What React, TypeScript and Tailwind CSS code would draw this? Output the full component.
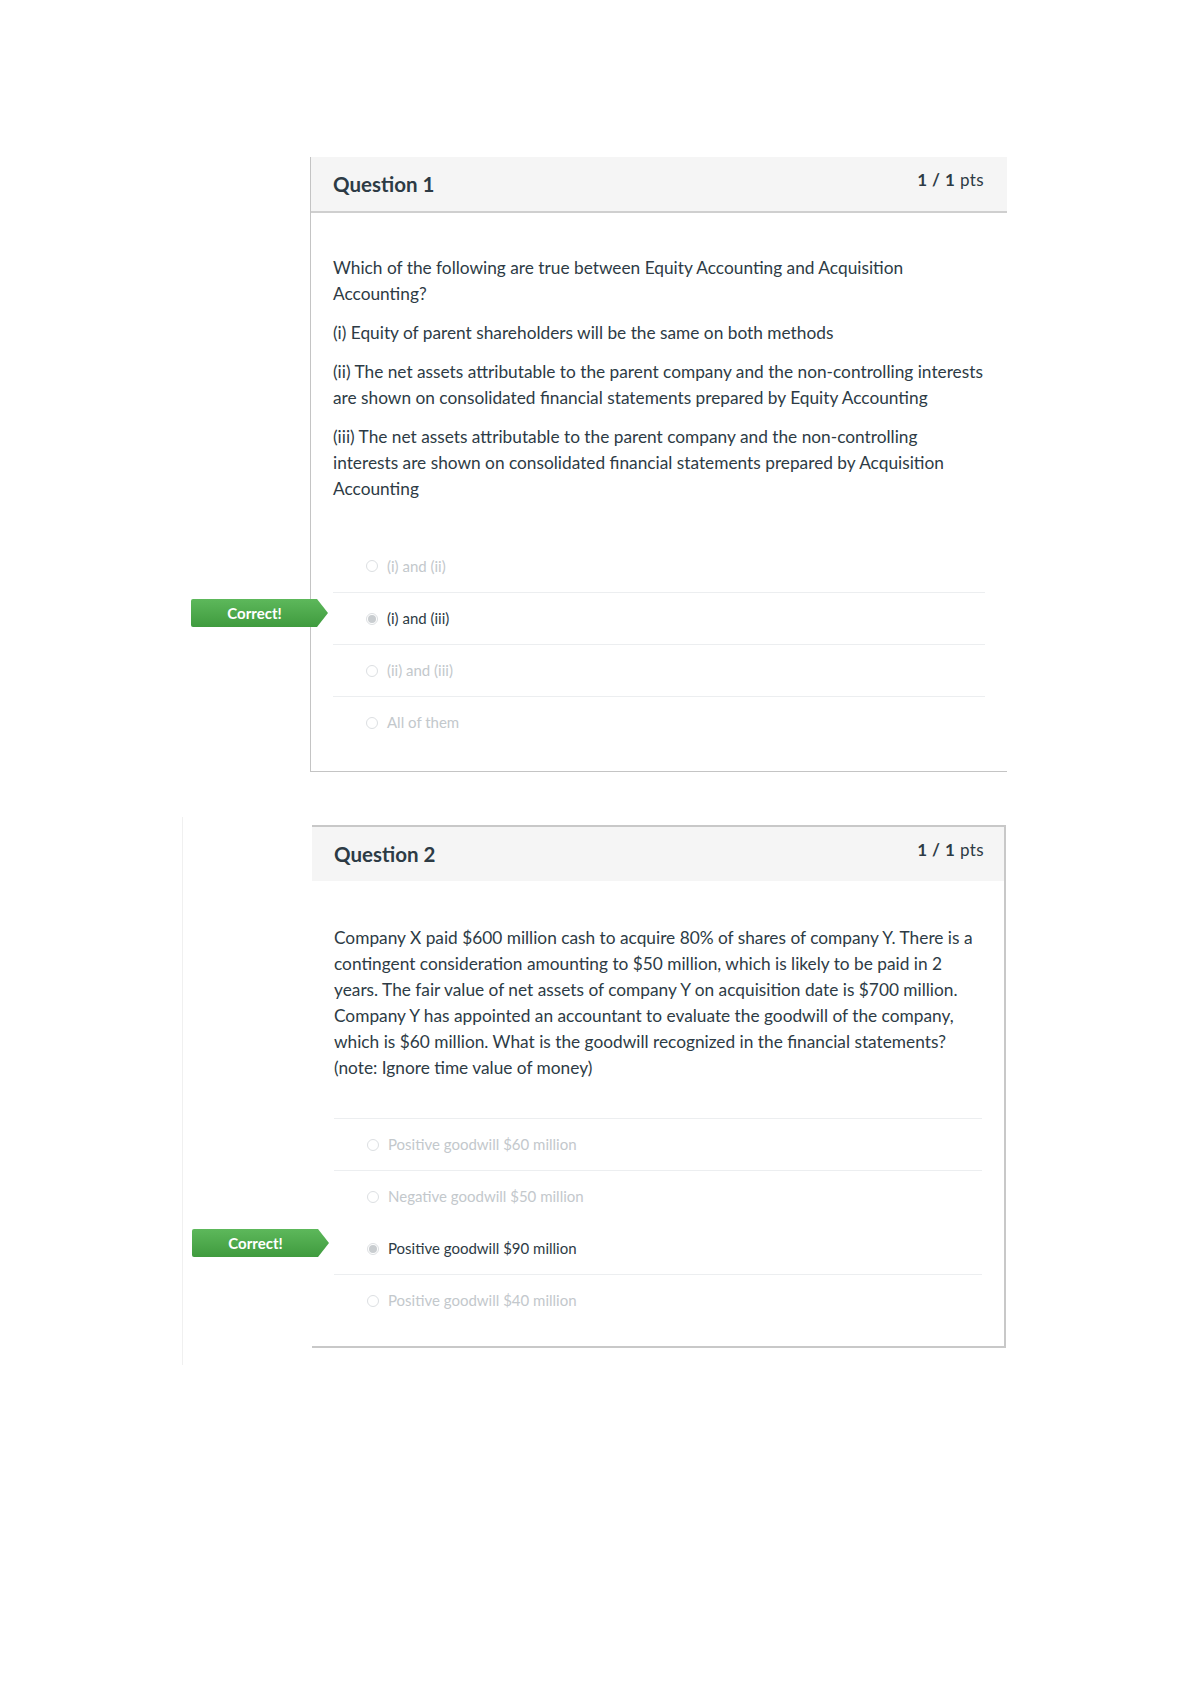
import React from "react";

type Ans = { text: string; selected?: boolean; border?: boolean };

function Radio({ selected }: { selected?: boolean }) {
  return (
    <span className="flex h-[12px] w-[12px] items-center justify-center rounded-full border border-[#dcdfe2] bg-white">
      {selected ? <span className="h-[8px] w-[8px] rounded-full bg-[#c9cdd0]" /> : null}
    </span>
  );
}

function Badge() {
  return (
    <div className="absolute left-[-142px] top-[6px] flex h-[28px] w-[137px] items-center [clip-path:polygon(0_0,calc(100%-11px)_0,100%_50%,calc(100%-11px)_100%,0_100%)] rounded-l-[2px] bg-gradient-to-b from-[#5db85b] to-[#3f9b3e]">
      <span className="w-[127px] text-center text-[15px] font-bold text-white">Correct!</span>
    </div>
  );
}

function AnswerRow({ a, first }: { a: Ans; first?: boolean }) {
  return (
    <div
      className={
        "relative flex h-[52px] items-center pl-[33px] " +
        (first ? "" : a.border === false ? "border-t border-transparent" : "border-t border-[#eceef0]")
      }
    >
      {a.selected ? <Badge /> : null}
      <Radio selected={a.selected} />
      <span className={"ml-[9px] text-[15px] " + (a.selected ? "text-[#2d3b45]" : "text-[#c3c8cc]")}>{a.text}</span>
    </div>
  );
}

function Header({ title, right }: { title: string; right: string }) {
  return (
    <div className={"flex h-[54px] items-start justify-between bg-[#f5f5f5] pl-[22px] " + right}>
      <div className="pt-[14px] text-[20.5px] font-bold leading-[26px] text-[#2d3b45]">{title}</div>
      <div className="pt-[12px] text-[17px] leading-[22px] tracking-[0.4px] text-[#2d3b45]">
        <span className="font-bold">1 / 1</span> <span>pts</span>
      </div>
    </div>
  );
}

export default function App() {
  const q1: Ans[] = [
    { text: "(i) and (ii)" },
    { text: "(i) and (iii)", selected: true },
    { text: "(ii) and (iii)" },
    { text: "All of them" },
  ];
  const q2: Ans[] = [
    { text: "Positive goodwill $60 million" },
    { text: "Negative goodwill $50 million" },
    { text: "Positive goodwill $90 million", selected: true, border: false },
    { text: "Positive goodwill $40 million" },
  ];
  return (
    <div className="min-h-[1698px] w-[1200px] bg-white font-['Lato','Noto_Sans',sans-serif] text-[#2d3b45]">
      <div className="pl-[310px] pt-[157px]">
        <div className="w-[697px] border-b border-l border-[#c4c4c4]">
          <div className="border-b-2 border-[#cfcfcf]">
            <Header title="Question 1" right="pr-[23px]" />
          </div>
          <div className="px-[22px] pb-[23px] pt-[42px]">
            <div className="text-[17.3px] leading-[26px]">
              <p>
                Which of the following are true between Equity Accounting and Acquisition
                <br />
                Accounting?
              </p>
              <p className="mt-[13px]">(i) Equity of parent shareholders will be the same on both methods</p>
              <p className="mt-[13px]">
                (ii) The net assets attributable to the parent company and the non-controlling interests
                <br />
                are shown on consolidated financial statements prepared by Equity Accounting
              </p>
              <p className="mt-[13px]">
                (iii) The net assets attributable to the parent company and the non-controlling
                <br />
                interests are shown on consolidated financial statements prepared by Acquisition
                <br />
                Accounting
              </p>
            </div>
            <div className="mt-[38px]">
              {q1.map((a, i) => (
                <AnswerRow key={i} a={a} first={i === 0} />
              ))}
            </div>
          </div>
        </div>
      </div>

      <div className="ml-[182px] mt-[45px] border-l border-[#f0f0f0] pb-[17px] pt-[8px]">
        <div className="ml-[129px] w-[694px] border-b-2 border-r-2 border-t-2 border-[#c8c8c8]">
          <Header title="Question 2" right="pr-[20px]" />
          <div className="px-[22px] pb-[20px] pt-[44px]">
            <p className="text-[17.3px] leading-[26px]">
              Company X paid $600 million cash to acquire 80% of shares of company Y. There is a
              <br />
              contingent consideration amounting to $50 million, which is likely to be paid in 2
              <br />
              years. The fair value of net assets of company Y on acquisition date is $700 million.
              <br />
              Company Y has appointed an accountant to evaluate the goodwill of the company,
              <br />
              which is $60 million. What is the goodwill recognized in the financial statements?
              <br />
              (note: Ignore time value of money)
            </p>
            <div className="mt-[37px]">
              {q2.map((a, i) => (
                <AnswerRow key={i} a={a} />
              ))}
            </div>
          </div>
        </div>
      </div>
    </div>
  );
}
